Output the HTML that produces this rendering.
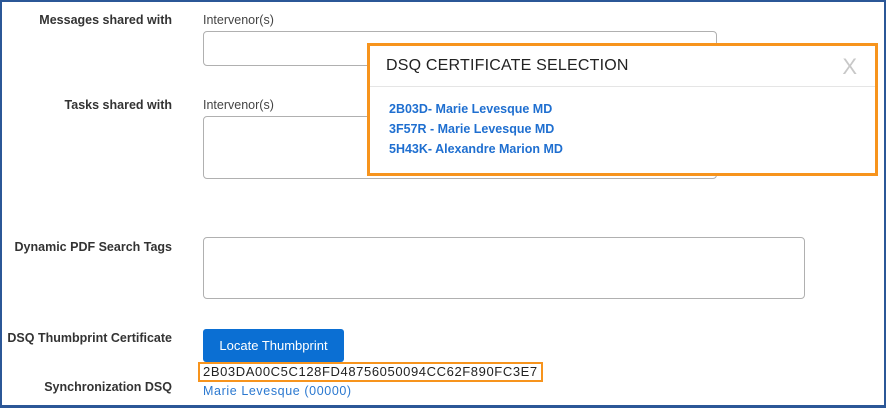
<!DOCTYPE html>
<html><head><style>
*{box-sizing:border-box;margin:0;padding:0}
body{width:886px;height:408px;background:#fff;font-family:"Liberation Sans",sans-serif;position:relative;overflow:hidden;color:#333}
.frame{position:absolute;left:0;top:0;width:886px;height:408px;border:2px solid #2b5797;border-bottom-width:3px}
.lbl{position:absolute;right:714px;font-size:12.5px;font-weight:bold;color:#333;text-align:right;white-space:nowrap}
.sm{position:absolute;left:203px;font-size:12.5px;color:#444}
.inp{position:absolute;border:1px solid #b0b0b0;border-radius:4px;background:#fff}
.btn{position:absolute;left:203px;top:329px;width:141px;height:33px;background:#0b6fd3;border-radius:3px;color:#fff;font-size:13px;line-height:33px;text-align:center}
.hash{position:absolute;left:198px;top:362px;width:345px;height:20px;border:2px solid #f7941d;font-size:13px;line-height:16px;padding-left:3px;color:#222;letter-spacing:0.6px;white-space:nowrap}
.link{color:#2a78d0;letter-spacing:0.6px}
.modal{position:absolute;left:367px;top:43px;width:511px;height:133px;border:3px solid #f7941d;background:#fff}
.mt{position:absolute;left:16px;top:11px;font-size:16px;color:#222;letter-spacing:0.2px}
.mx{position:absolute;right:18px;top:8px;font-size:22px;color:#c8c8c8}
.sep{position:absolute;left:0;right:0;top:40px;border-top:1px solid #e5e5e5}
.ml{position:absolute;left:19px;font-size:12.5px;font-weight:bold;color:#1f6fd0}
</style></head><body>
<div class="frame"></div>
<div class="lbl" style="top:13px">Messages shared with</div>
<div class="sm" style="top:13px">Intervenor(s)</div>
<div class="inp" style="left:203px;top:31px;width:514px;height:35px"></div>
<div class="lbl" style="top:98px">Tasks shared with</div>
<div class="sm" style="top:98px">Intervenor(s)</div>
<div class="inp" style="left:203px;top:116px;width:514px;height:63px"></div>
<div class="lbl" style="top:240px">Dynamic PDF Search Tags</div>
<div class="inp" style="left:203px;top:237px;width:602px;height:62px"></div>
<div class="lbl" style="top:331px">DSQ Thumbprint Certificate</div>
<div class="btn">Locate Thumbprint</div>
<div class="hash">2B03DA00C5C128FD48756050094CC62F890FC3E7</div>
<div class="lbl" style="top:380px">Synchronization DSQ</div>
<div class="sm link" style="top:384px">Marie Levesque (00000)</div>
<div class="modal">
<div class="mt">DSQ CERTIFICATE SELECTION</div>
<div class="mx">X</div>
<div class="sep"></div>
<div class="ml" style="top:56px">2B03D- Marie Levesque MD</div>
<div class="ml" style="top:76px">3F57R - Marie Levesque MD</div>
<div class="ml" style="top:96px">5H43K- Alexandre Marion MD</div>
</div>
</body></html>
